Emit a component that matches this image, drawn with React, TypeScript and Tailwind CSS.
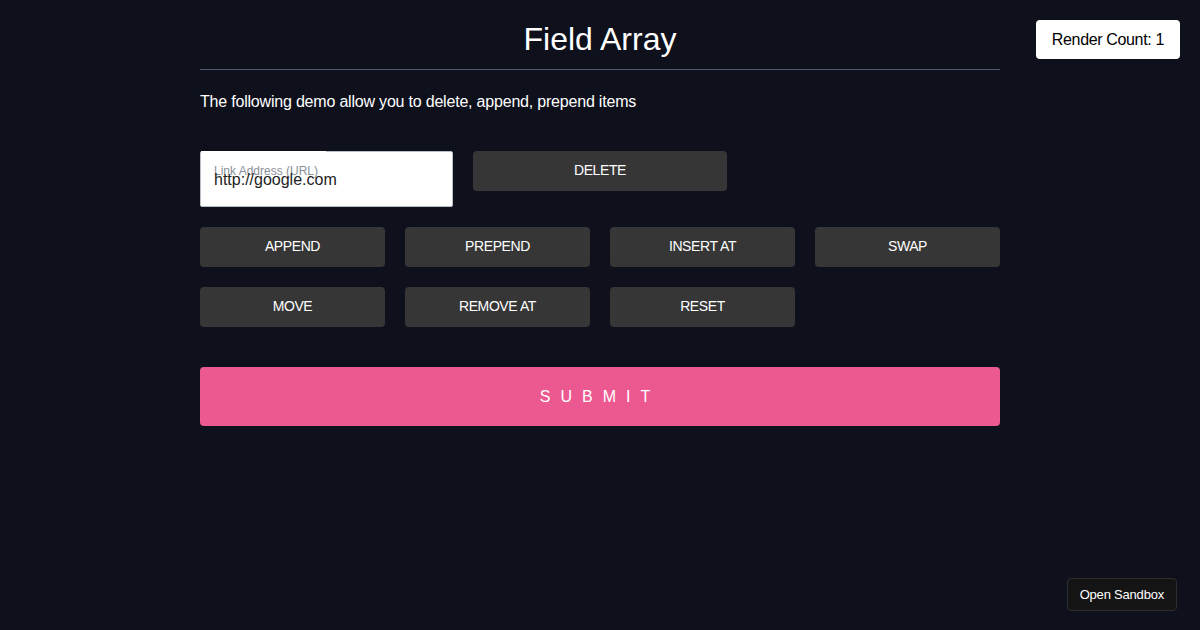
import { useState } from 'react'

const actions = ['APPEND', 'PREPEND', 'INSERT AT', 'SWAP', 'MOVE', 'REMOVE AT', 'RESET']

export default function App() {
  const [url, setUrl] = useState('http://google.com')

  return (
    <div className="relative min-h-[630px] bg-[#0e101c] text-white font-['Liberation_Sans',Arial,sans-serif]">
      <div className="absolute right-5 top-5 bg-white text-black rounded px-4 h-[39px] flex items-center text-base tracking-[-0.35px]">
        Render Count: 1
      </div>

      <div className="mx-auto w-[800px] pt-[19px]">
        <h1 className="text-[32px] leading-[40px] text-center font-normal pb-[10px] border-b border-[#4f5b77]">
          Field Array
        </h1>
        <p className="mt-[22px] text-base leading-[20px] tracking-[-0.2px]">
          The following demo allow you to delete, append, prepend items
        </p>

        <form className="mt-[39px]" onSubmit={(e) => e.preventDefault()}>
          <div className="grid grid-cols-3 gap-5 items-start">
            <div className="relative h-[56px] bg-white border border-[#b9c0c7] rounded-[2px]">
              <div className="absolute left-0 -top-px w-[125px] h-px bg-white" />
              <span className="absolute left-[13px] top-[12px] text-xs leading-[14px] text-[#8a8f98]">
                Link Address (URL)
              </span>
              <input
                value={url}
                onChange={(e) => setUrl(e.target.value)}
                className="absolute left-[13px] top-[18px] w-[220px] bg-transparent text-base leading-[20px] text-[#222] outline-none"
              />
            </div>
            <button type="button" className="h-10 pb-[2px] bg-[#363636] rounded text-sm text-white tracking-[-0.4px]">
              DELETE
            </button>
          </div>

          <div className="mt-5 grid grid-cols-4 gap-5">
            {actions.map((a) => (
              <button key={a} type="button" className="h-10 pb-[2px] bg-[#363636] rounded text-sm text-white tracking-[-0.4px]">
                {a}
              </button>
            ))}
          </div>

          <button
            type="submit"
            className="mt-10 w-full h-[59px] bg-[#ec5990] rounded text-base text-white tracking-[10px]"
          >
            SUBMIT
          </button>
        </form>
      </div>

      <button className="absolute right-[23px] bottom-[19px] h-[33px] px-3 bg-[#141414] border border-[#2e2e2e] rounded text-[13px] text-white tracking-[-0.2px]">
        Open Sandbox
      </button>
    </div>
  )
}
